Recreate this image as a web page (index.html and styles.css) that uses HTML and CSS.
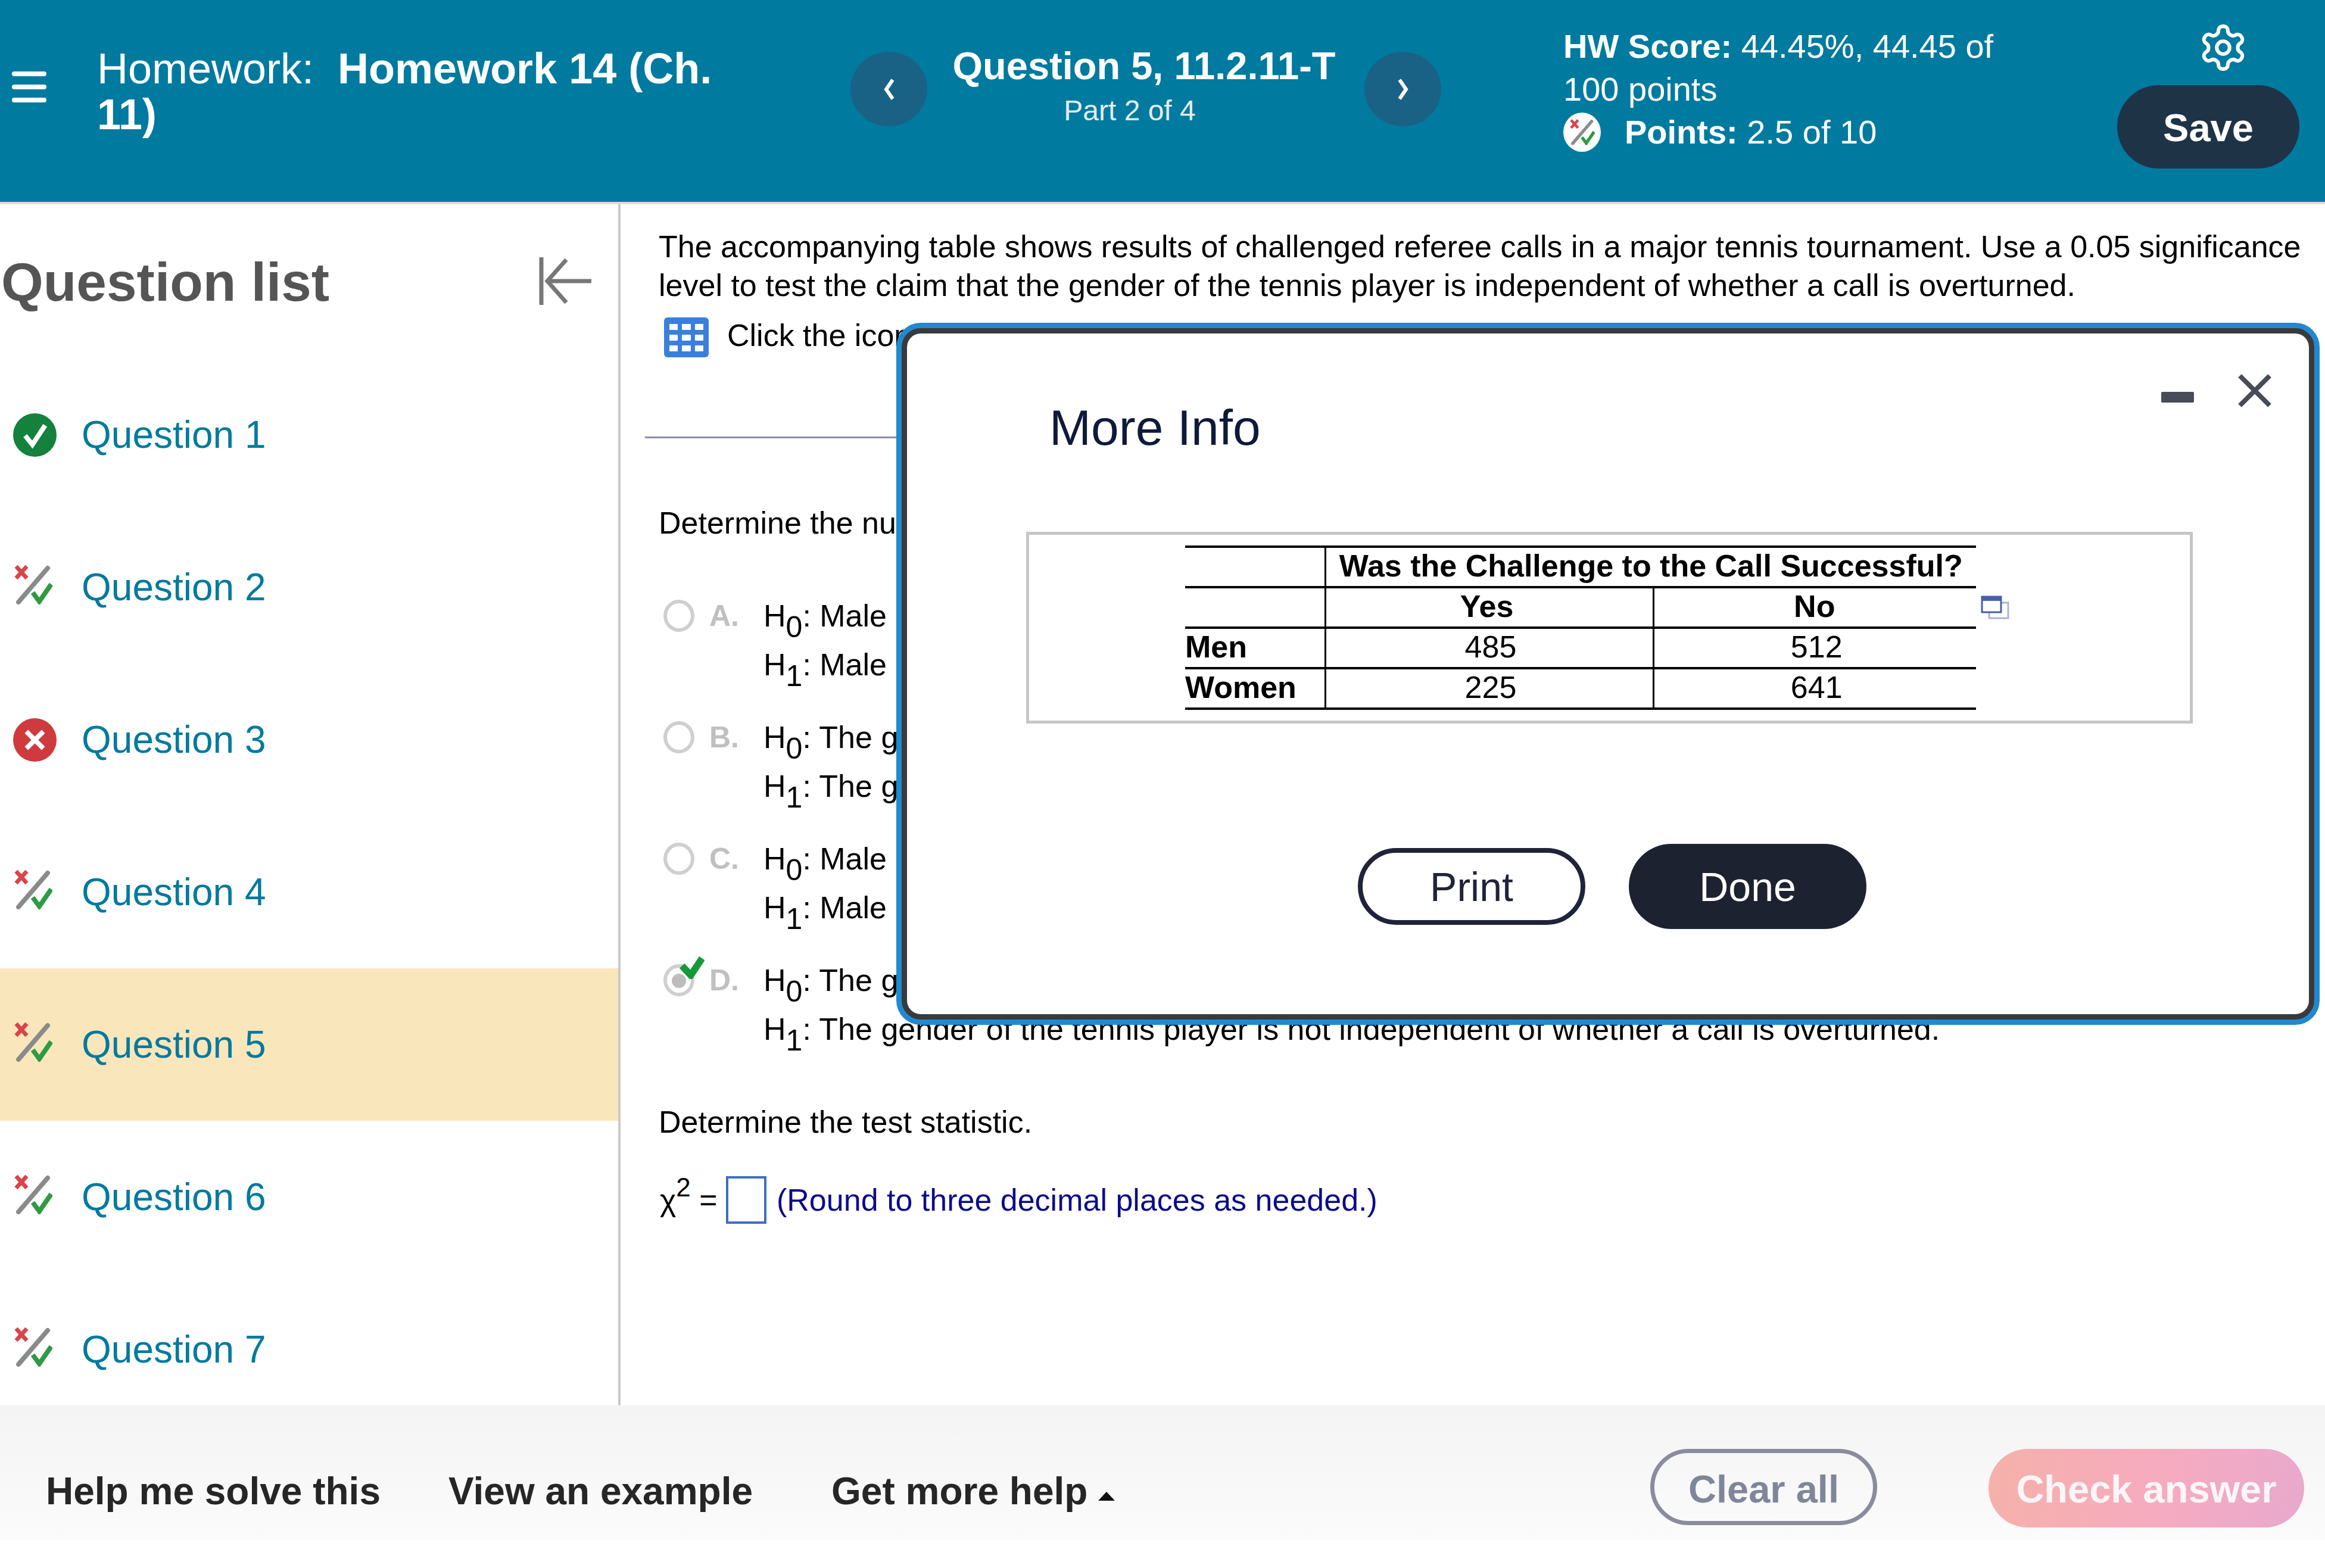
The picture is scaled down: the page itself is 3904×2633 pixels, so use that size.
FILE: index.html
```html
<!DOCTYPE html>
<html lang="en">
<head>
<meta charset="utf-8">
<title>Homework 14</title>
<link rel="stylesheet" href="styles.css">
</head>
<body>
<svg class="defs" width="0" height="0" aria-hidden="true">
  <symbol id="partial" viewBox="0 0 64 66">
    <path d="M3 2 L21 22 M21 2 L3 22" stroke="#d8454c" stroke-width="7" fill="none"/>
    <path d="M56 5 L7 62" stroke="#8a8a8a" stroke-width="8" stroke-linecap="round" fill="none"/>
    <path d="M31 46 L42 61 L62 32" stroke="#2f9a44" stroke-width="8" fill="none"/>
  </symbol>
</svg>
<div class="page">
  <header class="topbar">
    <div class="burger"><span></span><span></span><span></span></div>
    <div class="title">Homework:&nbsp; <b>Homework 14 (Ch.</b> <b>11)</b></div>
    <nav class="qnav">
      <div class="circle"><svg viewBox="0 0 20 40" class="chev"><path d="M16 4 L5 20 L16 36" /></svg></div>
      <div class="qnav-text">
        <div class="qnav-main">Question 5, 11.2.11-T</div>
        <div class="qnav-sub">Part 2 of 4</div>
      </div>
      <div class="circle"><svg viewBox="0 0 20 40" class="chev"><path d="M4 4 L15 20 L4 36" /></svg></div>
    </nav>
    <div class="score">
      <div class="score-line"><b>HW Score:</b> 44.45%, 44.45 of</div>
      <div class="score-line">100 points</div>
      <div class="score-line points">
        <span class="pts-icon"><svg class="pts-svg"><use href="#partial"/></svg></span>
        <span><b>Points:</b> 2.5 of 10</span>
      </div>
    </div>
    <div class="actions">
      <svg class="gear" viewBox="0 0 24 24"><path d="M12.22 2h-.44a2 2 0 0 0-2 2v.18a2 2 0 0 1-1 1.73l-.43.25a2 2 0 0 1-2 0l-.15-.08a2 2 0 0 0-2.73.73l-.22.38a2 2 0 0 0 .73 2.73l.15.1a2 2 0 0 1 1 1.72v.51a2 2 0 0 1-1 1.74l-.15.09a2 2 0 0 0-.73 2.73l.22.38a2 2 0 0 0 2.73.73l.15-.08a2 2 0 0 1 2 0l.43.25a2 2 0 0 1 1 1.73V20a2 2 0 0 0 2 2h.44a2 2 0 0 0 2-2v-.18a2 2 0 0 1 1-1.73l.43-.25a2 2 0 0 1 2 0l.15.08a2 2 0 0 0 2.73-.73l.22-.39a2 2 0 0 0-.73-2.73l-.15-.08a2 2 0 0 1-1-1.74v-.5a2 2 0 0 1 1-1.74l.15-.09a2 2 0 0 0 .73-2.73l-.22-.38a2 2 0 0 0-2.73-.73l-.15.08a2 2 0 0 1-2 0l-.43-.25a2 2 0 0 1-1-1.73V4a2 2 0 0 0-2-2z"/><circle cx="12" cy="12" r="3"/></svg>
      <div class="save">Save</div>
    </div>
  </header>

  <div class="main">
    <aside class="sidebar">
      <div class="side-head">
        <h2 class="side-title">Question list</h2>
        <svg class="collapse" viewBox="0 0 90 80"><path d="M4 0 V80 M88 40 H16 M46 4 L14 40 L46 76"/></svg>
      </div>
      <div class="qrow">
        <svg class="status" viewBox="0 0 72 72"><circle cx="36" cy="36" r="36" fill="#14813c"/><path d="M20 37 L32 52 L53 20" stroke="#fff" stroke-width="8" fill="none"/></svg>
        <span class="qlink">Question 1</span>
      </div>
      <div class="qrow"><svg class="status partial"><use href="#partial"/></svg><span class="qlink">Question 2</span></div>
      <div class="qrow">
        <svg class="status" viewBox="0 0 72 72"><circle cx="36" cy="36" r="36" fill="#cf3a3f"/><path d="M22 22 L50 50 M50 22 L22 50" stroke="#fff" stroke-width="8" fill="none"/></svg>
        <span class="qlink">Question 3</span>
      </div>
      <div class="qrow"><svg class="status partial"><use href="#partial"/></svg><span class="qlink">Question 4</span></div>
      <div class="qrow current"><svg class="status partial"><use href="#partial"/></svg><span class="qlink">Question 5</span></div>
      <div class="qrow"><svg class="status partial"><use href="#partial"/></svg><span class="qlink">Question 6</span></div>
      <div class="qrow"><svg class="status partial"><use href="#partial"/></svg><span class="qlink">Question 7</span></div>
    </aside>

    <section class="content">
      <p class="intro">The accompanying table shows results of challenged referee calls in a major tennis tournament. Use a 0.05 significance<br>level to test the claim that the gender of the tennis player is independent of whether a call is overturned.</p>
      <div class="click-row">
        <svg class="grid-icon" viewBox="0 0 75 67"><rect width="75" height="67" rx="6" fill="#3b7fdd"/><g fill="#fff"><rect x="9" y="11" width="14" height="10" rx="1"/><rect x="30" y="11" width="15" height="10" rx="1"/><rect x="52" y="11" width="14" height="10" rx="1"/><rect x="9" y="29" width="14" height="10" rx="1"/><rect x="30" y="29" width="15" height="10" rx="1"/><rect x="52" y="29" width="14" height="10" rx="1"/><rect x="9" y="47" width="14" height="10" rx="1"/><rect x="30" y="47" width="15" height="10" rx="1"/><rect x="52" y="47" width="14" height="10" rx="1"/></g></svg>
        <span>Click the icon</span>
      </div>
      <hr class="rule">
      <p class="prompt">Determine the null</p>
      <div class="options">
        <div class="option">
          <span class="radio"></span><span class="letter">A.</span>
          <div class="hyp">
            <div>H<sub>0</sub>: Male</div>
            <div>H<sub>1</sub>: Male</div>
          </div>
        </div>
        <div class="option">
          <span class="radio"></span><span class="letter">B.</span>
          <div class="hyp">
            <div>H<sub>0</sub>: The gender</div>
            <div>H<sub>1</sub>: The gender</div>
          </div>
        </div>
        <div class="option">
          <span class="radio"></span><span class="letter">C.</span>
          <div class="hyp">
            <div>H<sub>0</sub>: Male</div>
            <div>H<sub>1</sub>: Male</div>
          </div>
        </div>
        <div class="option">
          <span class="radio selected"></span><span class="letter">D.</span>
          <svg class="tick" viewBox="0 0 38 36"><path d="M3 15 L17 30 L35 3" stroke="#159a3a" stroke-width="11" fill="none"/></svg>
          <div class="hyp">
            <div>H<sub>0</sub>: The gender</div>
            <div>H<sub>1</sub>: The gender of the tennis player is not independent of whether a call is overturned.</div>
          </div>
        </div>
      </div>
      <p class="prompt test">Determine the test statistic.</p>
      <div class="answer">
        <span class="chi">χ<sup>2</sup> =</span>
        <span class="input-box"></span>
        <span class="note">(Round to three decimal places as needed.)</span>
      </div>
    </section>
  </div>

  <footer class="footer">
    <span class="help">Help me solve this</span>
    <span class="help">View an example</span>
    <span class="help">Get more help <i class="caret"></i></span>
    <div class="foot-actions">
      <div class="clear">Clear all</div>
      <div class="check">Check answer</div>
    </div>
  </footer>

  <div class="modal">
    <svg class="min-icon" viewBox="0 0 55 18"><rect width="55" height="18" rx="2" fill="#474c58"/></svg>
    <svg class="close-icon" viewBox="0 0 56 56"><path d="M3 3 L53 53 M53 3 L3 53" stroke="#474c58" stroke-width="8" fill="none"/></svg>
    <h1 class="modal-title">More Info</h1>
    <div class="data-box">
      <table class="data">
        <colgroup><col class="c1"><col class="c2"><col class="c3"></colgroup>
        <tr><th></th><th colspan="2" class="head">Was the Challenge to the Call Successful?</th></tr>
        <tr><th></th><th class="yes">Yes</th><th class="no">No</th></tr>
        <tr><th class="rowh">Men</th><td>485</td><td>512</td></tr>
        <tr><th class="rowh">Women</th><td>225</td><td>641</td></tr>
      </table>
      <svg class="copy-icon" viewBox="0 0 48 40"><rect x="14" y="12" width="32" height="26" fill="#fff" stroke="#a9b4dc" stroke-width="3"/><rect x="2" y="2" width="32" height="26" fill="#fff" stroke="#4a5fa8" stroke-width="3"/><rect x="1" y="1" width="34" height="8" fill="#4a5fa8"/></svg>
    </div>
    <div class="modal-actions">
      <div class="print">Print</div>
      <div class="done">Done</div>
    </div>
  </div>
</div>
</body>
</html>
```

FILE: styles.css
```css
* { box-sizing: border-box; }
html, body { margin: 0; height: 100%; }
body { font-family: "Liberation Sans", Arial, sans-serif; color: #000; background: #fff; overflow: hidden; }
.defs { position: absolute; }
.page { position: relative; height: 100vh; display: flex; flex-direction: column; }

/* top bar */
.topbar { height: 343px; flex: none; background: #007a9f; border-bottom: 4px solid #dcdcdc; color: #fff; display: flex; }
.burger { width: 163px; padding: 120px 0 0 20px; display: flex; flex-direction: column; gap: 14px; flex: none; }
.burger span { display: block; width: 58px; height: 8px; border-radius: 4px; background: #fff; }
.title { width: 1265px; flex: none; padding: 77px 200px 0 0; font-size: 72px; line-height: 77px; }
.qnav { width: 992px; flex: none; display: flex; align-items: flex-start; padding-top: 87px; }
.circle { width: 129px; height: 125px; border-radius: 50%; background: #1a6285; flex: none; display: flex; align-items: center; justify-content: center; }
.chev { width: 20px; height: 40px; }
.chev path { fill: none; stroke: #fff; stroke-width: 6; }
.qnav-text { flex: 1; text-align: center; margin-top: -10px; padding-right: 6px; }
.qnav-main { font-size: 65px; font-weight: 700; line-height: 68px; }
.qnav-sub { font-size: 48px; line-height: 62px; color: #e4eef3; padding-right: 48px; margin-top: 10px; }
.score { width: 1132px; flex: none; padding: 42px 0 0 205px; font-size: 56px; line-height: 72px; white-space: nowrap; }
.points { display: flex; align-items: center; gap: 40px; }
.pts-icon { width: 63px; height: 66px; border-radius: 50%; background: #fff; display: flex; align-items: center; justify-content: center; flex: none; }
.pts-svg { width: 42px; height: 44px; }
.actions { flex: none; width: 306px; margin-left: 3px; display: flex; flex-direction: column; }
.gear { width: 86px; height: 86px; margin: 37px 0 0 135px; fill: none; stroke: #fff; stroke-width: 1.7; flex: none; }
.save { margin-top: 20px; height: 140px; border-radius: 70px; background: #1f3347; font-size: 65px; font-weight: 700; display: flex; align-items: center; justify-content: center; padding-top: 3px; }

/* main */
.main { flex: 1; min-height: 0; display: flex; overflow: hidden; }
.sidebar { width: 1042px; flex: none; border-right: 4px solid #c9c9c9; overflow: hidden; }
.side-head { height: 259px; padding: 2px 43px 0 2px; display: flex; align-items: center; justify-content: space-between; }
.side-title { margin: 0; font-size: 91px; font-weight: 700; color: #555; }
.collapse { width: 90px; height: 80px; fill: none; stroke: #777; stroke-width: 7; margin-bottom: 3px; }
.qrow { height: 256px; display: flex; align-items: center; position: relative; padding-left: 137px; }
.qrow.current { background: #fae6bb; }
.status { position: absolute; left: 22px; top: 92px; width: 73px; height: 73px; }
.status.partial { left: 24px; top: 91px; width: 64px; height: 66px; }
.qlink { font-size: 64px; color: #007a9f; }

/* content */
.content { flex: 1; min-width: 0; padding: 39px 0 0 64px; font-size: 52px; line-height: 65px; white-space: nowrap; }
.intro { margin: 0; }
.click-row { margin-top: 19px; display: flex; align-items: center; height: 65px; }
.grid-icon { width: 75px; height: 67px; margin: 6px 0 0 9px; flex: none; }
.click-row span { margin-left: 31px; }
.rule { margin: 137px 0 0 -23px; border: 0; height: 3px; background: #8b8bab; width: 600px; }
.prompt { margin: 110px 0 0; }
.options { margin-top: 82px; display: flex; flex-direction: column; gap: 40px; }
.option { position: relative; display: flex; height: 164px; line-height: 82px; }
.radio { width: 52px; height: 54px; margin: 14px 0 0 8px; flex: none; border-radius: 50%; border: 6px solid #cfcfcf; background: #fff; position: relative; }
.radio.selected::after { content: ""; position: absolute; left: 8px; top: 10px; width: 24px; height: 24px; border-radius: 50%; background: #bdbdbd; }
.letter { width: 91px; flex: none; margin-left: 25px; font-size: 50px; font-weight: 700; color: #c0c0c0; }
.tick { position: absolute; left: 35px; top: 1px; width: 42px; height: 38px; }
.hyp sub { font-size: 50px; line-height: 0; vertical-align: -0.36em; }
.prompt.test { margin-top: 83px; }
.answer { margin-top: 54px; height: 88px; display: flex; align-items: center; }
.chi { width: 111px; flex: none; margin-left: 2px; }
.chi sup { font-size: 44px; line-height: 0; vertical-align: 0.55em; }
.input-box { width: 68px; height: 80px; flex: none; border: 4px solid #3f6dc6; background: #fff; }
.note { margin-left: 17px; color: #0b0b8c; }

/* footer */
.footer { height: 273px; flex: none; display: flex; align-items: flex-start; background: linear-gradient(#f4f4f5 0, #fbfbfc 225px, #fff 226px); padding: 0 0 0 77px; font-size: 64px; font-weight: 700; color: #262626; }
.help { margin: 105px 114px 0 0; line-height: 78px; white-space: nowrap; }
.help:nth-child(2) { margin-right: 132px; }
.caret { display: inline-block; width: 0; height: 0; margin-left: 0; vertical-align: 6px; border-left: 14px solid transparent; border-right: 14px solid transparent; border-bottom: 15px solid #111; }
.foot-actions { margin-left: auto; display: flex; align-items: flex-start; padding: 73px 35px 0 0; gap: 187px; font-size: 65px; }
.clear { width: 381px; height: 128px; border-radius: 64px; border: 7px solid #8a8c9e; color: #80869a; display: flex; align-items: center; justify-content: center; padding-top: 6px; }
.check { width: 530px; height: 132px; border-radius: 66px; color: #fbf6f8; background: linear-gradient(100deg, #f6b1a9, #f6abc0 55%, #e8a9cd); display: flex; align-items: center; justify-content: center; padding-top: 3px; }

/* modal */
.modal { position: absolute; left: 1514px; top: 551px; width: 2372px; height: 1161px; background: #fff; border: 9px solid #3a3a3c; border-radius: 32px; box-shadow: 0 0 0 9px #2189d0; padding: 108px 0 0 200px; }
.min-icon { position: absolute; right: 193px; top: 98px; width: 55px; height: 18px; }
.close-icon { position: absolute; right: 63px; top: 68px; width: 56px; height: 56px; }
.modal-title { margin: 0; padding-left: 39px; font-size: 84px; line-height: 100px; font-weight: 400; color: #0e1a3a; }
.data-box { position: relative; margin-top: 125px; width: 1959px; height: 322px; border: 5px solid #c6c6c6; padding: 18px 0 0 262px; }
.data { border-collapse: collapse; table-layout: fixed; width: 1328px; font-size: 52px; line-height: 60px; }
.c1 { width: 235px; }
.c2 { width: 551px; }
.c3 { width: 542px; }
.data th, .data td { height: 68px; padding: 0 0 4px; text-align: center; border-top: 4px solid #000; border-bottom: 4px solid #000; border-left: 3px solid #000; }
.data td { padding-left: 5px; }
.data tr > :first-child { border-left: 0; text-align: left; }
.data .yes { padding-right: 8px; }
.data .no { padding-right: 2px; }
.copy-icon { position: absolute; left: 1598px; top: 102px; width: 48px; height: 40px; }
.modal-actions { margin-top: 202px; padding-left: 557px; display: flex; align-items: center; gap: 73px; font-size: 68px; }
.print { width: 382px; height: 129px; border-radius: 65px; border: 8px solid #20243a; color: #20243a; display: flex; align-items: center; justify-content: center; }
.done { width: 399px; height: 143px; border-radius: 72px; background: #1d2231; color: #fff; display: flex; align-items: center; justify-content: center; }
```
